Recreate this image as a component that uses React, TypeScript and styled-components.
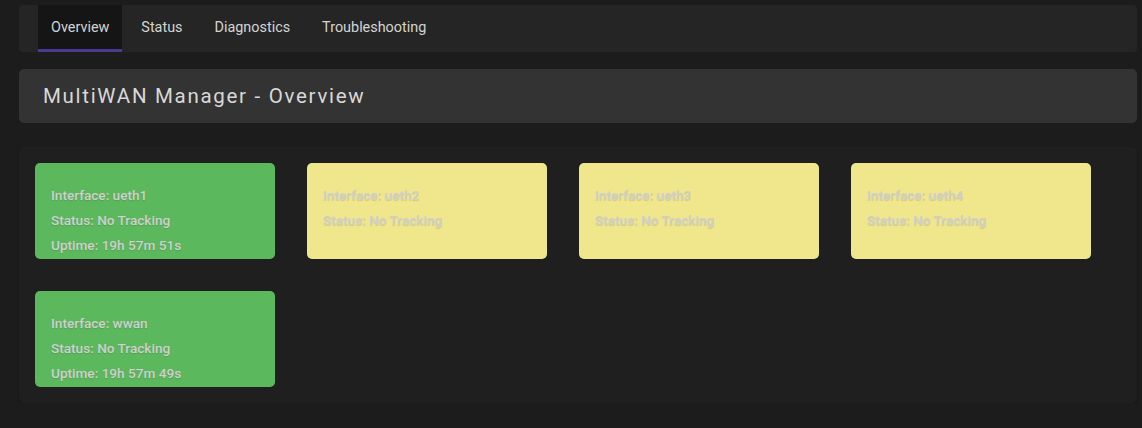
import React from "react";
import styled, { createGlobalStyle } from "styled-components";

const Global = createGlobalStyle`
  html, body { margin: 0; padding: 0; background: #1c1c1c; }
  body { font-family: Roboto, "Liberation Sans", sans-serif; }
`;

const Page = styled.div`
  padding: 5px 5px 0 19px;
  display: flex;
  flex-direction: column;
`;

const TabBar = styled.nav`
  display: flex;
  gap: 6px;
  height: 47px;
  padding-left: 19px;
  background: #252525;
  border-radius: 4px;
`;

const Tab = styled.div<{ $active?: boolean }>`
  display: flex;
  align-items: center;
  padding: 0 13px;
  font-size: 14.4px;
  color: #d4d4d4;
  background: ${(p) => (p.$active ? "#151515" : "transparent")};
  border-bottom: 3px solid ${(p) => (p.$active ? "#4b3a8f" : "transparent")};
  box-sizing: border-box;
`;

const TitleBar = styled.header`
  margin-top: 17px;
  height: 54px;
  background: #333333;
  border-radius: 5px;
  display: flex;
  align-items: center;
  padding-left: 24px;
`;

const Title = styled.h1`
  margin: 0;
  font-size: 20.5px;
  font-weight: 400;
  letter-spacing: 1.7px;
  color: #d8d8d8;
`;

const Content = styled.section`
  margin-top: 24px;
  background: #1f1f1f;
  border-radius: 5px;
  padding: 16px;
  display: grid;
  grid-template-columns: repeat(4, 240px);
  gap: 32px;
  box-shadow: 0 1px 2px rgba(0, 0, 0, 0.3);
`;

const Card = styled.div<{ $up: boolean }>`
  height: 96px;
  box-sizing: border-box;
  padding: 20px 16px 0;
  border-radius: 5px;
  background: ${(p) => (p.$up ? "#5cb85c" : "#f0e68c")};
`;

const Line = styled.div`
  font-size: 13.6px;
  font-weight: 500;
  line-height: 25px;
  color: #cfcfcf;
  text-shadow: 0 1px 1px rgba(0, 0, 0, 0.12);
`;

const cards = [
  { name: "ueth1", up: true, uptime: "19h 57m 51s" },
  { name: "ueth2", up: false },
  { name: "ueth3", up: false },
  { name: "ueth4", up: false },
  { name: "wwan", up: true, uptime: "19h 57m 49s" },
];

export default function App() {
  return (
    <>
      <Global />
      <Page>
        <TabBar>
          <Tab $active>Overview</Tab>
          <Tab>Status</Tab>
          <Tab>Diagnostics</Tab>
          <Tab>Troubleshooting</Tab>
        </TabBar>
        <TitleBar>
          <Title>MultiWAN Manager - Overview</Title>
        </TitleBar>
        <Content>
          {cards.map((c) => (
            <Card key={c.name} $up={c.up}>
              <Line>Interface: {c.name}</Line>
              <Line>Status: No Tracking</Line>
              {c.uptime && <Line>Uptime: {c.uptime}</Line>}
            </Card>
          ))}
        </Content>
      </Page>
    </>
  );
}
